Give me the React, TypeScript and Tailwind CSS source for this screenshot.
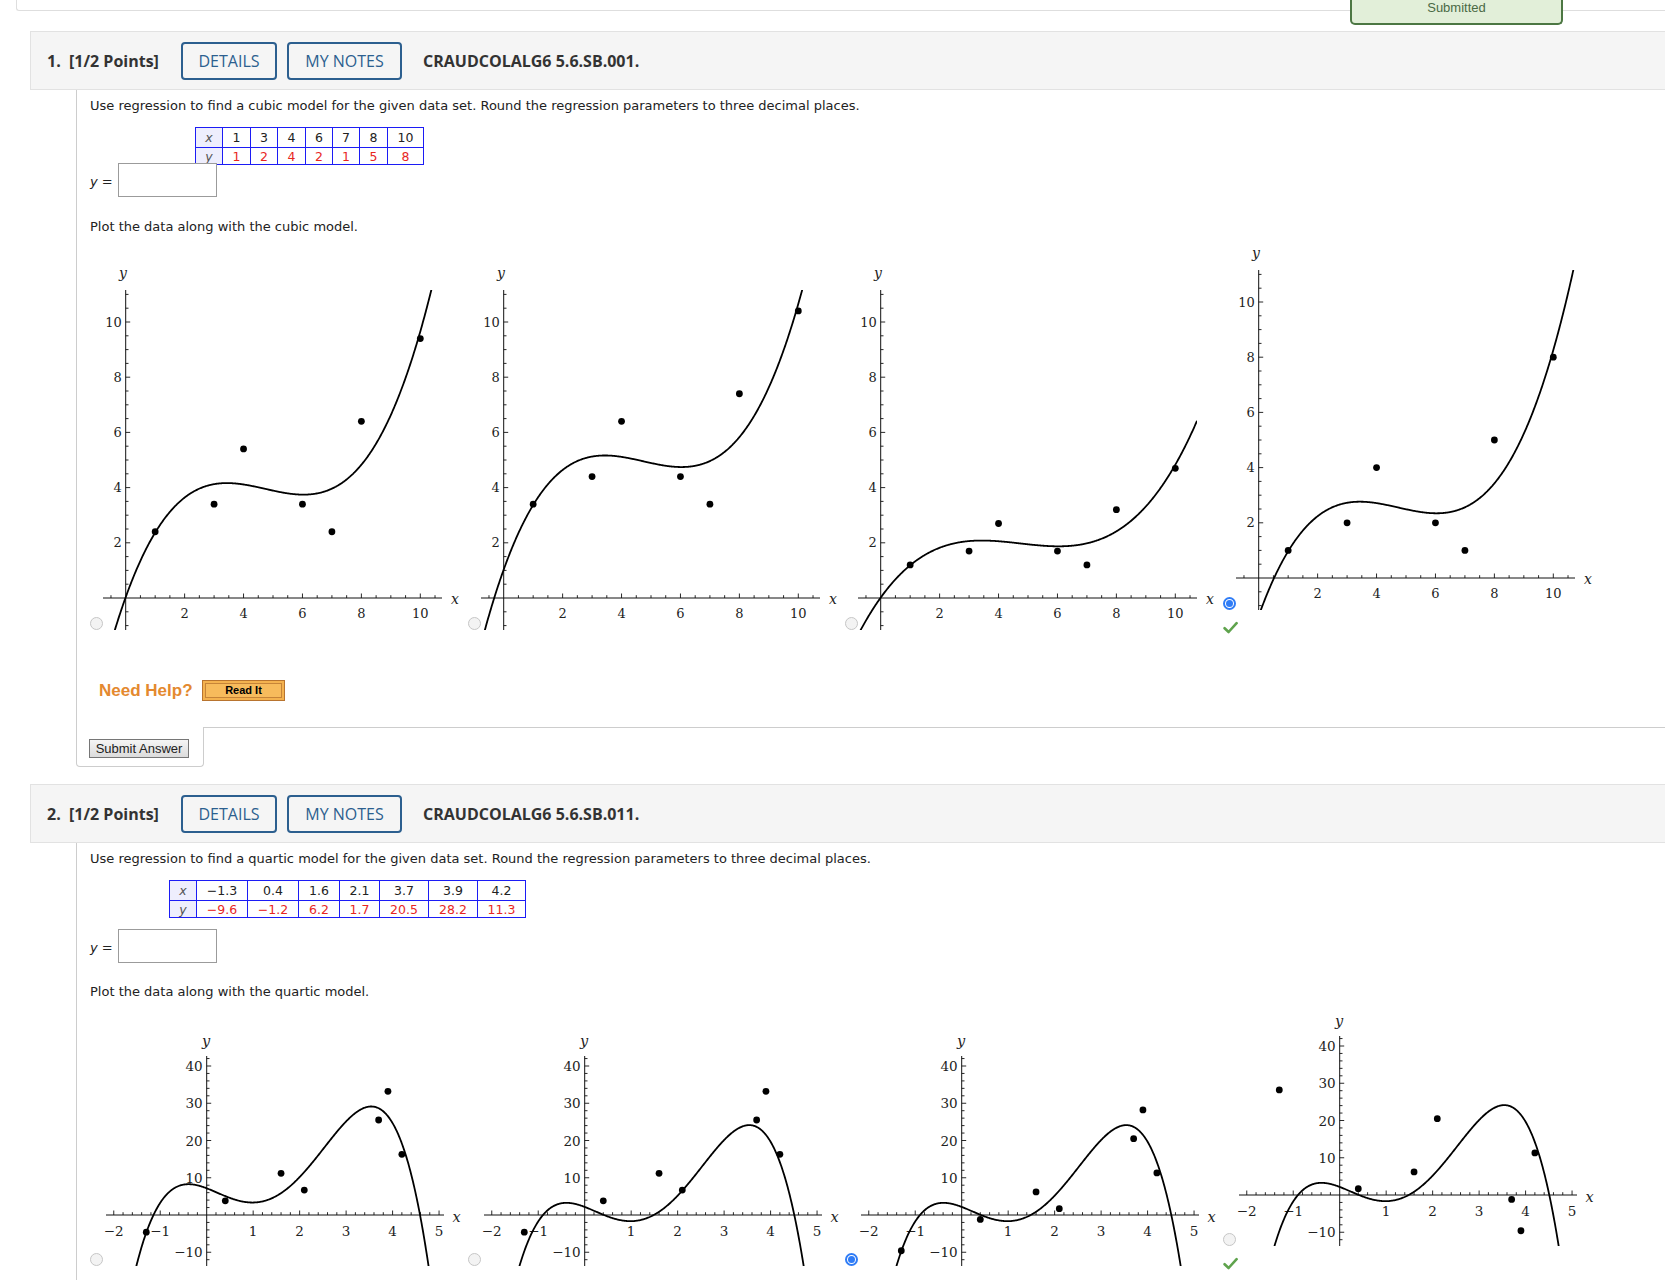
import { useId } from 'react'

type Pt = [number, number]

// least squares polynomial fit, coefficients low -> high
function polyfit(xs: number[], ys: number[], deg: number) {
  const n = deg + 1
  const A: number[][] = []
  for (let r = 0; r < n; r++) {
    const row: number[] = []
    for (let c = 0; c < n; c++) row.push(xs.reduce((s, x) => s + Math.pow(x, r + c), 0))
    row.push(xs.reduce((s, x, i) => s + Math.pow(x, r) * ys[i], 0))
    A.push(row)
  }
  for (let i = 0; i < n; i++) {
    let p = i
    for (let k = i + 1; k < n; k++) if (Math.abs(A[k][i]) > Math.abs(A[p][i])) p = k
    const tmp = A[i]
    A[i] = A[p]
    A[p] = tmp
    for (let k = i + 1; k < n; k++) {
      const m = A[k][i] / A[i][i]
      for (let j = i; j <= n; j++) A[k][j] -= m * A[i][j]
    }
  }
  const a: number[] = new Array(n).fill(0)
  for (let i = n - 1; i >= 0; i--) {
    let s = A[i][n]
    for (let j = i + 1; j < n; j++) s -= A[i][j] * a[j]
    a[i] = s / A[i][i]
  }
  return a
}

const evalPoly = (a: number[], x: number) => a.reduce((s, c, i) => s + c * Math.pow(x, i), 0)

type Axis = {
  w: number
  h: number
  ox: number
  oy: number
  ux: number
  uy: number
  x0: number
  x1: number
  y0: number
  y1: number
  xStep: number
  xEvery: number
  yStep: number
  yEvery: number
  xTicks: number[]
  yTicks: number[]
  xLabDy: number
  xName: Pt
  yName: Pt
  size: number
}

const fmt = (n: number) => (n < 0 ? '\u2212' + Math.abs(n) : String(n))

function ticks(min: number, max: number, step: number, every: number) {
  const out: { v: number; major: boolean }[] = []
  for (let k = Math.ceil(min / step - 1e-9); k * step <= max + 1e-9; k++) {
    if (k === 0) continue
    const v = k * step
    const r = v / every
    out.push({ v, major: Math.abs(r - Math.round(r)) < 1e-6 })
  }
  return out
}

function Plot({ ax, f, pts }: { ax: Axis; f: (x: number) => number; pts: Pt[] }) {
  const id = 'c' + useId().replace(/[^a-zA-Z0-9]/g, '')
  const X = (x: number) => ax.ox + x * ax.ux
  const Y = (y: number) => ax.oy - y * ax.uy
  const xmin = (ax.x0 - ax.ox) / ax.ux
  const xmax = (ax.x1 - ax.ox) / ax.ux
  const ymin = (ax.oy - ax.y1) / ax.uy
  const ymax = (ax.oy - ax.y0) / ax.uy
  const N = 600
  let d = ''
  for (let i = 0; i <= N; i++) {
    const x = xmin + ((xmax - xmin) * i) / N
    const py = Math.max(-400, Math.min(ax.h + 400, Y(f(x))))
    d += `${i ? 'L' : 'M'}${X(x).toFixed(2)},${py.toFixed(2)}`
  }
  const serif = "'DejaVu Serif', serif"
  return (
    <svg className="block" width={ax.w} height={ax.h} viewBox={`0 0 ${ax.w} ${ax.h}`}>
      <defs>
        <clipPath id={id}>
          <rect x={ax.x0} y={ax.y0} width={ax.x1 - ax.x0} height={ax.y1 - ax.y0} />
        </clipPath>
      </defs>
      <line x1={ax.x0} y1={ax.oy} x2={ax.x1} y2={ax.oy} stroke="#111" strokeWidth="1" />
      <line x1={ax.ox} y1={ax.y0} x2={ax.ox} y2={ax.y1} stroke="#111" strokeWidth="1" />
      {ticks(xmin, xmax, ax.xStep, ax.xEvery).map((t) => (
        <line
          key={'x' + t.v}
          x1={X(t.v)}
          x2={X(t.v)}
          y1={ax.oy}
          y2={ax.oy - (t.major ? 4.5 : 2.8)}
          stroke="#111"
          strokeWidth="0.9"
        />
      ))}
      {ticks(ymin, ymax, ax.yStep, ax.yEvery).map((t) => (
        <line
          key={'y' + t.v}
          y1={Y(t.v)}
          y2={Y(t.v)}
          x1={ax.ox}
          x2={ax.ox + (t.major ? 4.5 : 2.8)}
          stroke="#111"
          strokeWidth="0.9"
        />
      ))}
      {ax.xTicks.map((v) => (
        <text
          key={'lx' + v}
          x={X(v)}
          y={ax.oy + ax.xLabDy}
          textAnchor="middle"
          dominantBaseline="central"
          fontFamily={serif}
          fontSize={ax.size}
          fill="#222"
        >
          {fmt(v)}
        </text>
      ))}
      {ax.yTicks.map((v) => (
        <text
          key={'ly' + v}
          x={ax.ox - 4}
          y={Y(v)}
          textAnchor="end"
          dominantBaseline="central"
          fontFamily={serif}
          fontSize={ax.size}
          fill="#222"
        >
          {fmt(v)}
        </text>
      ))}
      <text
        x={ax.xName[0]}
        y={ax.xName[1]}
        textAnchor="middle"
        dominantBaseline="central"
        fontFamily={serif}
        fontStyle="italic"
        fontSize={ax.size + 1}
        fill="#222"
      >
        x
      </text>
      <text
        x={ax.yName[0]}
        y={ax.yName[1]}
        textAnchor="middle"
        dominantBaseline="central"
        fontFamily={serif}
        fontStyle="italic"
        fontSize={ax.size + 1}
        fill="#222"
      >
        y
      </text>
      <path d={d} fill="none" stroke="#000" strokeWidth="1.8" clipPath={`url(#${id})`} />
      {pts.map(([x, y], i) => (
        <circle key={i} cx={X(x)} cy={Y(y)} r="3.4" fill="#000" />
      ))}
    </svg>
  )
}

function Radio({ checked }: { checked?: boolean }) {
  if (checked)
    return (
      <span className="flex h-[13px] w-[13px] items-center justify-center rounded-full border-2 border-[#2f7cf6] bg-white">
        <span className="h-[7px] w-[7px] rounded-full bg-[#2f7cf6]" />
      </span>
    )
  return <span className="block h-[13px] w-[13px] rounded-full border border-[#c6c6c6] bg-[#f3f3f3]" />
}

function Check() {
  return (
    <svg className="mt-[11px] block" width="15" height="13" viewBox="0 0 15 13">
      <path
        d="M1.6 7.2 L5.6 11 L13.6 2.2"
        fill="none"
        stroke="#5fa34d"
        strokeWidth="2.6"
        strokeLinecap="round"
        strokeLinejoin="round"
      />
    </svg>
  )
}

type ChoiceData = {
  f: (x: number) => number
  pts: Pt[]
  checked?: boolean
  raised?: boolean
}

function Choices({ ax, items }: { ax: Axis; items: ChoiceData[] }) {
  return (
    <div className="grid grid-cols-[repeat(4,377.6px)] items-end">
      {items.map((c, i) => (
        <div key={i} className="flex items-end">
          <div className="flex w-[13px] flex-col">
            <Radio checked={c.checked} />
            {c.raised ? (
              <div className="h-[20px]">
                <Check />
              </div>
            ) : null}
          </div>
          <div className={c.raised ? 'mb-[20px]' : ''}>
            <Plot ax={ax} f={c.f} pts={c.pts} />
          </div>
        </div>
      ))}
    </div>
  )
}

function Header({ num, code }: { num: number; code: string }) {
  return (
    <div className="flex h-[59px] items-center border border-r-0 border-[#e2e2e2] bg-[#f5f5f5] pl-[16px] font-['Open_Sans',sans-serif] text-[16px] text-[#333]">
      <span className="w-[22px] font-bold">{num}.</span>
      <span className="w-[112px] font-bold">[1/2 Points]</span>
      <span className="flex h-[38px] w-[96px] items-center justify-center rounded-[4px] border-2 border-[#2c5f8f] font-medium text-[#2c5f8f]">
        DETAILS
      </span>
      <span className="ml-[10px] flex h-[38px] w-[115px] items-center justify-center rounded-[4px] border-2 border-[#2c5f8f] font-medium text-[#2c5f8f]">
        MY NOTES
      </span>
      <span className="ml-[21px] font-bold">{code}</span>
    </div>
  )
}

function DataTable({
  xs,
  ys,
  widths,
  className,
}: {
  xs: string[]
  ys: string[]
  widths: string[]
  className: string
}) {
  const cell = 'border border-[#1c1cf5] p-0 text-center leading-[15px]'
  return (
    <table className={`border-collapse text-[12.5px] ${className}`}>
      <tbody>
        <tr className="h-[20px]">
          <td className={`${cell} bg-[#eeeefd] italic text-[#555] ${widths[0]}`}>x</td>
          {xs.map((v, i) => (
            <td key={i} className={`${cell} text-[#222] ${widths[i + 1]}`}>
              {v}
            </td>
          ))}
        </tr>
        <tr className="h-[17px]">
          <td className={`${cell} bg-[#eeeefd] italic text-[#555]`}>y</td>
          {ys.map((v, i) => (
            <td key={i} className={`${cell} text-[#e8261f]`}>
              {v}
            </td>
          ))}
        </tr>
      </tbody>
    </table>
  )
}

function AnswerRow({ className }: { className: string }) {
  return (
    <div className={`flex h-[34px] items-center ${className}`}>
      <span className="w-[28px] pt-[3px] text-[13px]">
        <i>y</i> =
      </span>
      <div className="h-[34px] w-[99px] border border-[#9b9b9b] bg-white" />
    </div>
  )
}

const cubicX = [1, 3, 4, 6, 7, 8, 10]
const cubicY = [1, 2, 4, 2, 1, 5, 8]
const c3 = polyfit(cubicX, cubicY, 3)
const f3 = (x: number) => evalPoly(c3, x)
const cubicPts = (m: number, b: number): Pt[] => cubicX.map((x, i) => [x, cubicY[i] * m + b])

const quartX = [-1.3, 0.4, 1.6, 2.1, 3.7, 3.9, 4.2]
const quartY = [-9.6, -1.2, 6.2, 1.7, 20.5, 28.2, 11.3]
const c4 = polyfit(quartX, quartY, 4)
const f4 = (x: number) => evalPoly(c4, x)
const quartPts = (b: number): Pt[] => quartX.map((x, i) => [x, quartY[i] + b])
const shuffledY = [28.2, 1.7, 6.2, 20.5, -1.2, -9.6, 11.3]

const cubicAxis: Axis = {
  w: 364,
  h: 380,
  ox: 22.7,
  oy: 348,
  ux: 29.46,
  uy: 27.6,
  x0: 0,
  x1: 339,
  y0: 40,
  y1: 380,
  xStep: 0.5,
  xEvery: 2,
  yStep: 0.5,
  yEvery: 2,
  xTicks: [2, 4, 6, 8, 10],
  yTicks: [2, 4, 6, 8, 10],
  xLabDy: 15,
  xName: [352, 349],
  yName: [20, 23],
  size: 13,
}

const quartAxis: Axis = {
  w: 364,
  h: 246,
  ox: 103.7,
  oy: 195,
  ux: 46.47,
  uy: 3.725,
  x0: 3,
  x1: 341,
  y0: 36,
  y1: 246,
  xStep: 0.2,
  xEvery: 1,
  yStep: 2,
  yEvery: 10,
  xTicks: [-2, -1, 1, 2, 3, 4, 5],
  yTicks: [-10, 10, 20, 30, 40],
  xLabDy: 15.7,
  xName: [353.7, 196.7],
  yName: [103, 21],
  size: 13.5,
}

const q1Choices: ChoiceData[] = [
  { f: (x) => f3(x) + 1.4, pts: cubicPts(1, 1.4) },
  { f: (x) => f3(x) + 2.4, pts: cubicPts(1, 2.4) },
  { f: (x) => 0.5 * f3(x) + 0.7, pts: cubicPts(0.5, 0.7) },
  { f: f3, pts: cubicPts(1, 0), checked: true, raised: true },
]

const q2Choices: ChoiceData[] = [
  { f: (x) => f4(x) + 5, pts: quartPts(5) },
  { f: f4, pts: quartPts(5) },
  { f: f4, pts: quartPts(0), checked: true },
  { f: f4, pts: quartX.map((x, i) => [x, shuffledY[i]] as Pt), raised: true },
]

export default function App() {
  return (
    <div className="relative h-[1280px] w-[1665px] overflow-hidden bg-white font-['DejaVu_Sans',sans-serif] text-[#222]">
      <div className="relative ml-[16px] h-[11px] rounded-bl-[3px] border-b border-l border-[#dedede]">
        <div className="absolute left-[1333px] top-0 flex h-[25px] w-[213px] justify-center rounded-b-[5px] border-2 border-t-0 border-[#4c7743] bg-[#e2efd9] font-['Liberation_Sans',sans-serif] text-[13px] leading-[16px] text-[#4a6a45]">
          Submitted
        </div>
      </div>

      <section className="ml-[30px] mt-[20px]">
        <Header num={1} code="CRAUDCOLALG6 5.6.SB.001." />
        <div className="ml-[46px] border-l border-[#cdcdcd] pb-[26px] pl-[13px] pt-[8px]">
          <p className="text-[13px] leading-[16px]">
            Use regression to find a cubic model for the given data set. Round the regression parameters to three
            decimal places.
          </p>
          <DataTable
            className="ml-[105px] mt-[13px]"
            xs={['1', '3', '4', '6', '7', '8', '10']}
            ys={['1', '2', '4', '2', '1', '5', '8']}
            widths={['w-[27px]', 'w-[28px]', 'w-[27px]', 'w-[28px]', 'w-[27px]', 'w-[27px]', 'w-[28px]', 'w-[36px]']}
          />
          <AnswerRow className="-mt-[2px]" />
          <p className="mt-[22px] text-[13px] leading-[16px]">Plot the data along with the cubic model.</p>
          <div className="-mt-[5px]">
            <Choices ax={cubicAxis} items={q1Choices} />
          </div>
          <div className="mt-[50px] flex h-[21px] items-center font-['Liberation_Sans',sans-serif]">
            <span className="ml-[9px] w-[103px] text-[17px] font-bold text-[#e4892f]">Need Help?</span>
            <span className="flex h-[21px] w-[83px] border border-[#b8742f] bg-[#f4b24f] p-[2px]">
              <span className="flex h-full w-full items-center justify-center border border-[#c68438] bg-[#f7bb5c] text-[11px] font-bold text-black">
                Read It
              </span>
            </span>
          </div>
        </div>
        <div className="flex">
          <div className="ml-[46px] h-[40px] w-[128px] rounded-b-[4px] border border-t-0 border-[#cdcdcd] pl-[12px] pt-[12px]">
            <span className="flex h-[19px] w-[100px] items-center justify-center border border-[#767676] bg-linear-to-b from-[#f5f5f5] to-[#dcdcdc] font-['Liberation_Sans',sans-serif] text-[13px] text-[#222]">
              Submit Answer
            </span>
          </div>
          <div className="flex-1 border-t border-[#cdcdcd]" />
        </div>
      </section>

      <section className="ml-[30px] mt-[17px]">
        <Header num={2} code="CRAUDCOLALG6 5.6.SB.011." />
        <div className="ml-[46px] border-l border-[#cdcdcd] pb-[40px] pl-[13px] pt-[8px]">
          <p className="text-[13px] leading-[16px]">
            Use regression to find a quartic model for the given data set. Round the regression parameters to three
            decimal places.
          </p>
          <DataTable
            className="ml-[79px] mt-[13px]"
            xs={['\u22121.3', '0.4', '1.6', '2.1', '3.7', '3.9', '4.2']}
            ys={['\u22129.6', '\u22121.2', '6.2', '1.7', '20.5', '28.2', '11.3']}
            widths={['w-[27px]', 'w-[51px]', 'w-[51px]', 'w-[41px]', 'w-[40px]', 'w-[49px]', 'w-[49px]', 'w-[48px]']}
          />
          <AnswerRow className="mt-[11px]" />
          <p className="mt-[21px] text-[13px] leading-[16px]">Plot the data along with the quartic model.</p>
          <div className="mt-0">
            <Choices ax={quartAxis} items={q2Choices} />
          </div>
        </div>
      </section>
    </div>
  )
}
